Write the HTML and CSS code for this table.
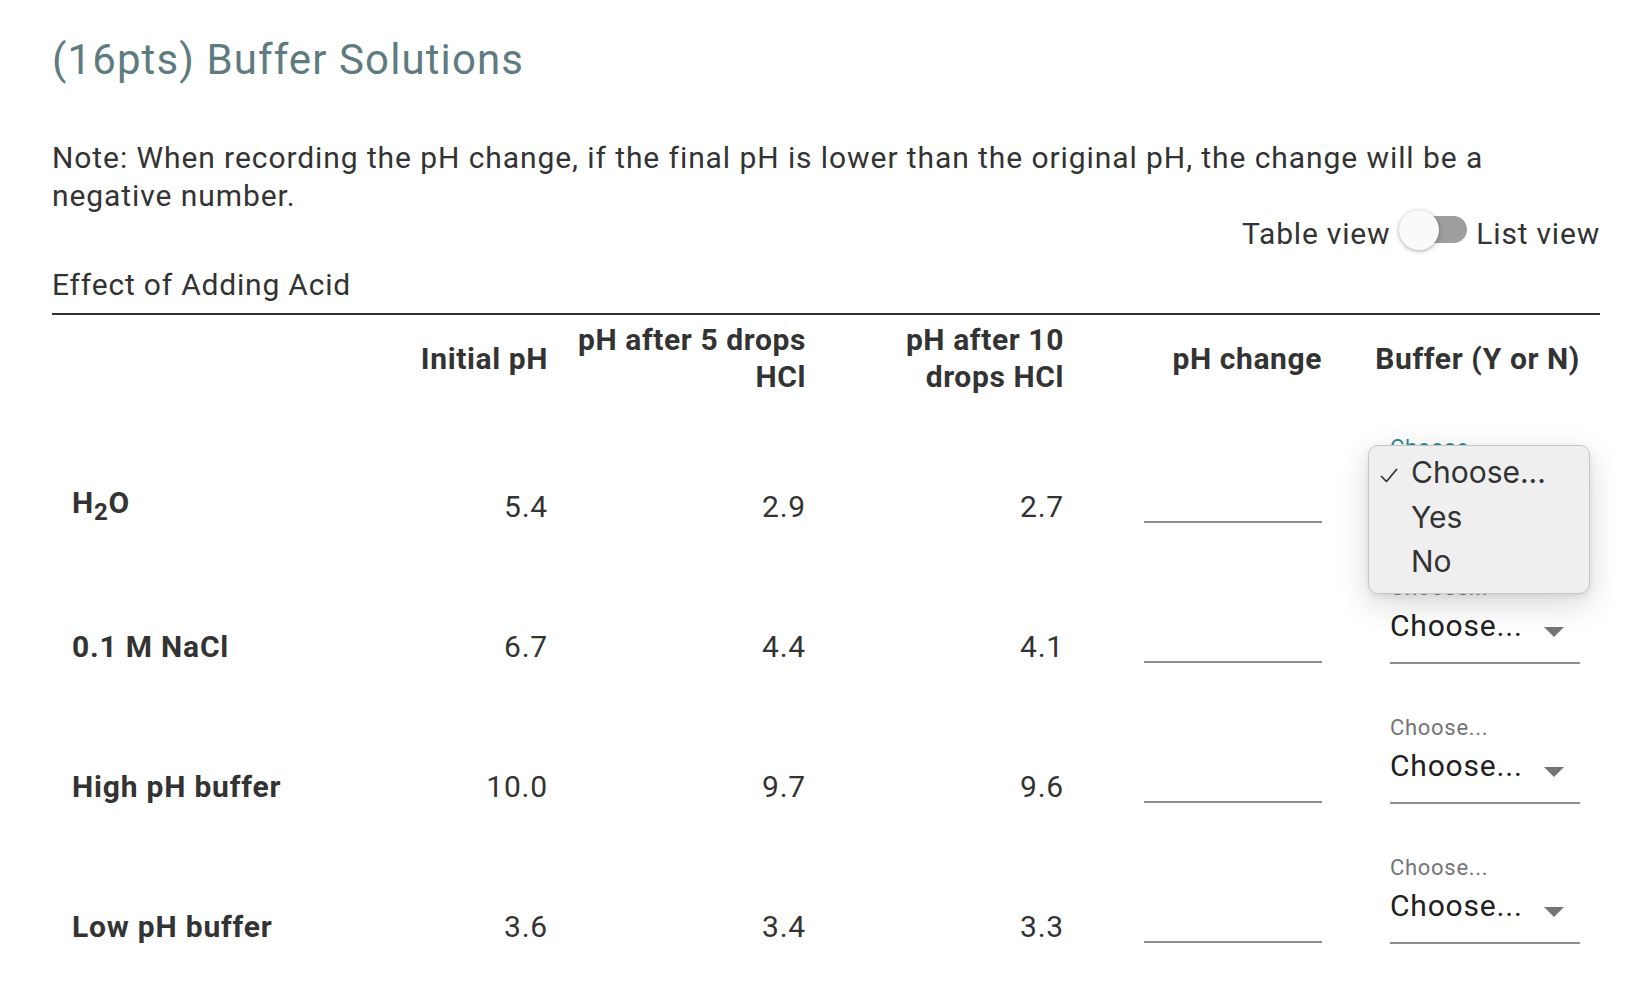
FILE: index.html
```html
<!DOCTYPE html>
<html lang="en">
<head>
<meta charset="utf-8">
<title>Buffer Solutions</title>
<link rel="stylesheet" href="styles.css">
</head>
<body>
<main class="page">
  <h1 class="title">(16pts) Buffer Solutions</h1>
  <p class="note">Note: When recording the pH change, if the final pH is lower than the original pH, the change will be a negative number.</p>
  <div class="view-toggle">
    <span>Table view</span>
    <span class="switch"><span class="switch-track"></span><span class="switch-knob"></span></span>
    <span>List view</span>
  </div>
  <div class="caption">Effect of Adding Acid</div>
  <table class="data">
    <thead>
      <tr>
        <th></th>
        <th>Initial pH</th>
        <th>pH after 5 drops<br>HCl</th>
        <th>pH after 10<br>drops HCl</th>
        <th>pH change</th>
        <th>Buffer (Y or N)</th>
      </tr>
    </thead>
    <tbody>
      <tr>
        <td class="label">H<sub>2</sub>O</td>
        <td>5.4</td>
        <td>2.9</td>
        <td>2.7</td>
        <td><input class="ph-input" type="text" aria-label="pH change"></td>
        <td class="sel-cell">
          <div class="select">
            <span class="select-label focused">Choose...</span>
            <div class="select-field focused"><span>Choose...</span><span class="arrow"></span></div>
            <div class="menu">
              <div class="menu-item"><svg class="check" viewBox="0 0 18 15" width="18" height="15"><polyline points="1.5,8.5 6.5,13.5 16.5,1.5" fill="none" stroke="#333" stroke-width="1.7" stroke-linecap="round" stroke-linejoin="round"/></svg>Choose...</div>
              <div class="menu-item">Yes</div>
              <div class="menu-item">No</div>
            </div>
          </div>
        </td>
      </tr>
      <tr>
        <td class="label">0.1 M NaCl</td>
        <td>6.7</td>
        <td>4.4</td>
        <td>4.1</td>
        <td><input class="ph-input" type="text" aria-label="pH change"></td>
        <td class="sel-cell">
          <div class="select">
            <span class="select-label">Choose...</span>
            <div class="select-field"><span>Choose...</span><span class="arrow"></span></div>
          </div>
        </td>
      </tr>
      <tr>
        <td class="label">High pH buffer</td>
        <td>10.0</td>
        <td>9.7</td>
        <td>9.6</td>
        <td><input class="ph-input" type="text" aria-label="pH change"></td>
        <td class="sel-cell">
          <div class="select">
            <span class="select-label">Choose...</span>
            <div class="select-field"><span>Choose...</span><span class="arrow"></span></div>
          </div>
        </td>
      </tr>
      <tr>
        <td class="label">Low pH buffer</td>
        <td>3.6</td>
        <td>3.4</td>
        <td>3.3</td>
        <td><input class="ph-input" type="text" aria-label="pH change"></td>
        <td class="sel-cell">
          <div class="select">
            <span class="select-label">Choose...</span>
            <div class="select-field"><span>Choose...</span><span class="arrow"></span></div>
          </div>
        </td>
      </tr>
    </tbody>
  </table>
</main>
</body>
</html>
```

FILE: styles.css
```css
* { box-sizing: border-box; }
html, body { margin: 0; background: #fff; }
body {
  font-family: Roboto, "Liberation Sans", sans-serif;
  color: #333;
  font-size: 30px;
  letter-spacing: 0.8px;
  overflow: hidden;
}
.page {
  padding: 0 50px 0 52px;
}
.title {
  margin: 35px 0 0;
  font-size: 42px;
  line-height: 50px;
  letter-spacing: 1.1px;
  font-weight: 400;
  color: #5e7c80;
}
.note {
  margin: 54px 0 0;
  font-size: 30px;
  line-height: 38px;
  letter-spacing: 0.92px;
}
.view-toggle {
  display: flex;
  justify-content: flex-end;
  align-items: center;
  gap: 9px;
  font-size: 30px;
  line-height: 38px;
}
.switch {
  position: relative;
  display: block;
  width: 68px;
  height: 38px;
}
.switch-track {
  position: absolute;
  left: 17px;
  top: 1px;
  width: 51px;
  height: 27px;
  border-radius: 14px;
  background: #9e9e9e;
}
.switch-knob {
  position: absolute;
  left: 0;
  top: -5px;
  width: 40px;
  height: 40px;
  border-radius: 50%;
  background: #fafafa;
  box-shadow: 0 1px 4px rgba(0, 0, 0, 0.35);
}
.caption {
  margin-top: 13px;
  font-size: 30px;
  line-height: 38px;
  padding-bottom: 9px;
  border-bottom: 2px solid #333;
}
.data {
  width: 100%;
  table-layout: fixed;
  border-collapse: collapse;
}
.data th {
  font-weight: 700;
  font-size: 30px;
  line-height: 37px;
  letter-spacing: 0.6px;
  text-align: right;
  padding: 6px 20px 42px 4px;
  vertical-align: middle;
  white-space: nowrap;
}
.data td {
  padding: 0 20px;
  font-size: 30px;
  line-height: 38px;
  text-align: right;
  vertical-align: middle;
}
.data td.label {
  text-align: left;
  font-weight: 700;
  white-space: nowrap;
}
.data sub {
  font-size: 0.8em;
}
.ph-input {
  display: block;
  width: 178px;
  height: 32px;
  margin-left: auto;
  padding: 0;
  border: 0;
  border-bottom: 2px solid #8e8e8e;
  background: transparent;
  font: inherit;
}
.select {
  position: relative;
  width: 190px;
  height: 140px;
  margin-left: auto;
  text-align: left;
}
.select-label {
  display: block;
  font-size: 22px;
  line-height: 22px;
  letter-spacing: 0.7px;
  color: #757575;
}
.select-label.focused {
  color: #2a8a9b;
}
.select-field {
  margin-top: 9px;
  height: 56px;
  display: flex;
  justify-content: space-between;
  align-items: flex-start;
  padding-right: 16px;
  border-bottom: 2px solid #8e8e8e;
  color: #212121;
  font-size: 30px;
  line-height: 36px;
  white-space: nowrap;
}
.select-field.focused {
  border-bottom-color: #2a8a9b;
}
.arrow {
  flex: none;
  width: 0;
  height: 0;
  margin-top: 19px;
  border-left: 10px solid transparent;
  border-right: 10px solid transparent;
  border-top: 10px solid #757575;
}
.menu {
  position: absolute;
  z-index: 10;
  top: 8px;
  left: -22px;
  width: 222px;
  height: 149px;
  padding-top: 4px;
  background: #efefef;
  border: 1px solid #c6c6c6;
  border-radius: 10px;
  box-shadow: 0 10px 32px rgba(0, 0, 0, 0.16), 0 2px 6px rgba(0, 0, 0, 0.08);
  font-family: Inter, "Liberation Sans", sans-serif;
  font-size: 30px;
  letter-spacing: 0;
  color: #333;
}
.menu-item {
  position: relative;
  height: 44.5px;
  line-height: 44px;
  padding-left: 42px;
}
.check {
  position: absolute;
  left: 11px;
  top: 18px;
}
```
